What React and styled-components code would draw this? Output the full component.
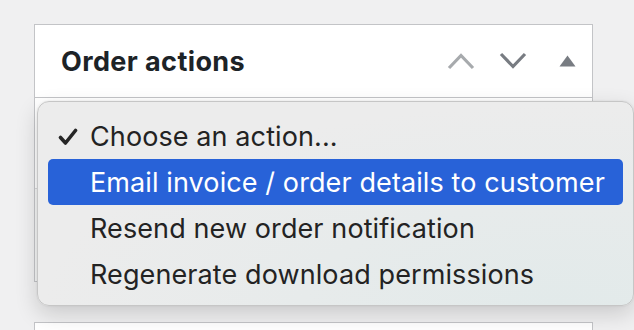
import React from "react";
import styled, { createGlobalStyle } from "styled-components";

const GlobalStyle = createGlobalStyle`
  html, body {
    margin: 0;
    padding: 0;
    background: #f0f0f1;
    font-family: Inter, "Liberation Sans", sans-serif;
    -webkit-font-smoothing: antialiased;
  }
`;

const actions = [
  "Choose an action...",
  "Email invoice / order details to customer",
  "Resend new order notification",
  "Regenerate download permissions",
];

export default function App() {
  return (
    <Page>
      <GlobalStyle />
      <Postbox>
        <Header>
          <h2>Order actions</h2>
          <Handles>
            <Handle $light>
              <svg width="28" height="18" viewBox="0 0 28 18">
                <polyline points="2,16 14,3.5 26,16" fill="none" stroke="currentColor" strokeWidth="3.2" />
              </svg>
            </Handle>
            <Handle>
              <svg width="28" height="18" viewBox="0 0 28 18">
                <polyline points="2,2 14,14.5 26,2" fill="none" stroke="currentColor" strokeWidth="3.2" />
              </svg>
            </Handle>
            <Handle $small>
              <svg width="17" height="12" viewBox="0 0 17 12">
                <polygon points="0.5,11.5 8.5,0.5 16.5,11.5" fill="currentColor" />
              </svg>
            </Handle>
          </Handles>
        </Header>
        <Inside>
          <FakeSelect />
        </Inside>
        <Footer />
      </Postbox>
      <Postbox $next />

      <Menu>
        {actions.map((label, i) => (
          <Item key={label} $active={i === 1}>
            {i === 0 && (
              <Check>
                <svg width="20" height="18" viewBox="0 0 20 18">
                  <polyline points="2.5,9.5 7.5,15 17.5,2.5" fill="none" stroke="currentColor" strokeWidth="3.6" strokeLinecap="round" strokeLinejoin="round" />
                </svg>
              </Check>
            )}
            {label}
          </Item>
        ))}
      </Menu>
    </Page>
  );
}

const Page = styled.div`
  position: relative;
  width: 634px;
  height: 330px;
  overflow: hidden;
  padding: 24px 0 0 34px;
  box-sizing: border-box;
`;

const Postbox = styled.div`
  width: 559px;
  box-sizing: border-box;
  background: #fff;
  border: 1px solid #c3c4c7;
  margin-top: ${(p) => (p.$next ? "40px" : "0")};
  height: ${(p) => (p.$next ? "60px" : "auto")};
`;

const Header = styled.div`
  height: 72px;
  border-bottom: 1px solid #c3c4c7;
  display: flex;
  align-items: center;
  justify-content: space-between;
  padding: 0 16px 0 26px;
  h2 {
    margin: 0;
    font-size: 27px;
    font-weight: 700;
    color: #1d2327;
    letter-spacing: 0.4px;
  }
`;

const Handles = styled.div`
  display: flex;
  align-items: center;
  gap: 24px;
`;

const Handle = styled.span`
  display: flex;
  color: ${(p) => (p.$light ? "#a7aaad" : "#787c82")};
  margin-left: ${(p) => (p.$small ? "8px" : "0")};
`;

const Inside = styled.div`
  height: 90px;
  padding: 12px;
  box-sizing: border-box;
`;

const FakeSelect = styled.div`
  border: 1px solid #8c8f94;
  border-radius: 4px;
  height: 40px;
`;

const Footer = styled.div`
  height: 92px;
  background: #f6f7f7;
  border-top: 1px solid #dcdcde;
`;

const Menu = styled.div`
  position: absolute;
  left: 37px;
  top: 101px;
  width: 597px;
  height: 205px;
  box-sizing: border-box;
  padding: 11px 10px 0;
  border: 1px solid #c6c6c6;
  border-radius: 12px;
  background: radial-gradient(ellipse at 88% 100%, #e2eaea 0%, #e7ebeb 35%, #ececec 70%);
  box-shadow: 0 8px 22px rgba(0, 0, 0, 0.16), 0 0 2px rgba(0, 0, 0, 0.1);
  display: flex;
  flex-direction: column;
`;

const Item = styled.div`
  position: relative;
  height: 46px;
  display: flex;
  align-items: center;
  padding-left: 42px;
  border-radius: 5px;
  font-size: 27px;
  letter-spacing: 0.1px;
  color: ${(p) => (p.$active ? "#fff" : "#232323")};
  background: ${(p) => (p.$active ? "#2862d8" : "transparent")};
  white-space: nowrap;
`;

const Check = styled.span`
  position: absolute;
  left: 10px;
  top: 15px;
  display: flex;
  color: #262626;
`;
